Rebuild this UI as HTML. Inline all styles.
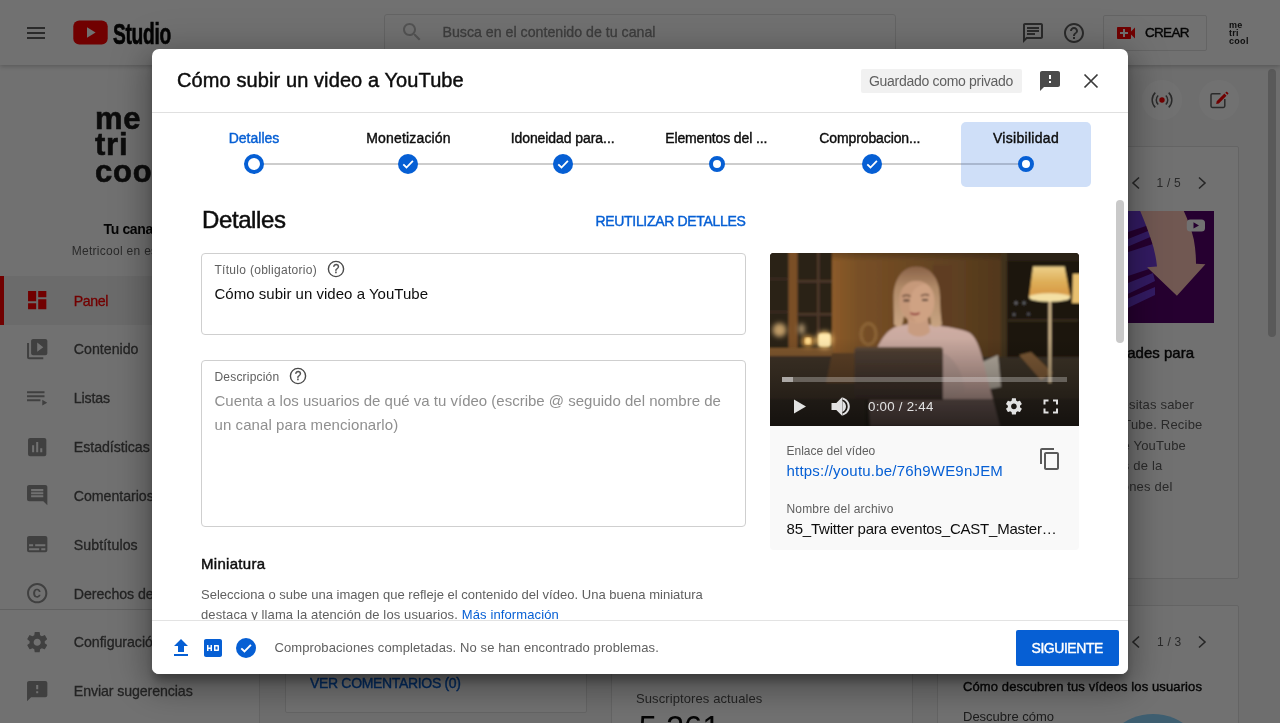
<!DOCTYPE html>
<html lang="es">
<head>
<meta charset="utf-8">
<title>YouTube Studio</title>
<style>
*{box-sizing:border-box;margin:0;padding:0}
html,body{width:1280px;height:723px;overflow:hidden;background:#f9f9f9;font-family:"Liberation Sans",sans-serif;color:#0d0d0d}
.abs{position:absolute}
#bg{opacity:.999;position:absolute;left:0;top:0;width:1280px;height:723px;overflow:hidden;background:#f9f9f9}
#hdr{position:absolute;left:0;top:0;width:1280px;height:65px;background:#fff;box-shadow:0 1px 5px rgba(0,0,0,.25);z-index:3}
#side{position:absolute;left:0;top:65px;width:260px;height:658px;background:#fff;border-right:1px solid #e4e4e4;z-index:2}
.nav{position:absolute;left:0;width:259px;height:48px}
.nav span{position:absolute;left:73px;top:15px;font-size:15px;color:#505050;letter-spacing:.1px}
.t{position:absolute;white-space:nowrap;line-height:1}
#ov{position:absolute;left:0;top:0;width:1280px;height:723px;background:rgba(0,0,0,.555);z-index:10}
#dlg{opacity:.999;position:absolute;left:152px;top:49px;width:976px;height:625.400px;background:#fff;border-radius:7px;z-index:20;box-shadow:0 8px 10px -2px rgba(0,0,0,.3),0 12px 30px 4px rgba(0,0,0,.22),0 4px 40px 8px rgba(0,0,0,.14);overflow:hidden}
.card{position:absolute;background:#fff;border:1px solid #e2e2e2;border-radius:2px}

.st{top:82px;font-size:14px;color:#0d0d0d;transform:translateX(-50%)}
.ring{position:absolute;width:16px;height:16px;border-radius:50%;border:4.300px solid #065fd4;background:#fff}
.ring.big{width:20px;height:20px;border-width:4.400px}
.chk{position:absolute;width:20px;height:20px;border-radius:50%;background:#065fd4}
.chk svg{display:block}
.box{border:1px solid #cfcfcf;border-radius:4px;background:#fff}
.nv{left:73.800px;font-size:14.200px;letter-spacing:-.05px;-webkit-text-stroke:.3px currentColor}
.cb{font-size:13px;color:#606060;letter-spacing:.2px}
</style>
</head>
<body>
<div id="bg">
  <div id="hdr">
    <svg class="abs" style="left:24px;top:21px" width="24" height="24" viewBox="0 0 24 24"><path fill="#606060" d="M3 18h18v-2H3v2zm0-5h18v-2H3v2zm0-7v2h18V6H3z"/></svg>
    <svg class="abs" style="left:73px;top:20px" width="35" height="25" viewBox="0 0 35 25"><rect x="0.300" y="0.500" width="34.400" height="24" rx="6" ry="6" fill="#ff0000"/><path d="M14 7.300l8.600 5.200-8.600 5.200z" fill="#fff"/></svg>
    <div class="t" id="h_studio" style="left:113px;top:18.600px;font-size:30px;font-weight:bold;color:#0a0a0a;transform-origin:0 0;transform:scaleX(.64);letter-spacing:-.5px;-webkit-text-stroke:.7px #0a0a0a">Studio</div>
    <div class="abs" style="left:384px;top:14px;width:512px;height:41px;border:1px solid #e2e2e2;border-radius:3px;background:#fff"></div>
    <svg class="abs" style="left:400px;top:20px" width="24" height="24" viewBox="0 0 24 24"><path fill="#bcbcbc" d="M15.500 14h-.79l-.28-.27C15.410 12.590 16 11.110 16 9.500 16 5.910 13.090 3 9.500 3S3 5.910 3 9.500 5.910 16 9.500 16c1.610 0 3.090-.59 4.230-1.570l.27.28v.79l5 4.990L20.490 19l-4.990-5zm-6 0C7.010 14 5 11.990 5 9.500S7.010 5 9.500 5 14 7.010 14 9.500 11.990 14 9.500 14z"/></svg>
    <div class="t" id="h_search" style="left:442.500px;top:25px;font-size:14.200px;color:#8a8a8a;-webkit-text-stroke:.3px #8a8a8a">Busca en el contenido de tu canal</div>
    <svg class="abs" style="left:1021px;top:20.500px" width="24" height="24" viewBox="0 0 24 24"><path fill="#606060" d="M4 4h16v12H5.170L4 17.170V4m0-2c-1.100 0-1.990.9-1.990 2L2 22l4-4h14c1.100 0 2-.9 2-2V4c0-1.100-.9-2-2-2H4zm2 10h8v2H6v-2zm0-3h12v2H6V9zm0-3h12v2H6V6z"/></svg>
    <svg class="abs" style="left:1061.700px;top:20.500px" width="24" height="24" viewBox="0 0 24 24"><path fill="#606060" d="M11 18h2v-2h-2v2zm1-16C6.480 2 2 6.480 2 12s4.480 10 10 10 10-4.480 10-10S17.520 2 12 2zm0 18c-4.410 0-8-3.590-8-8s3.590-8 8-8 8 3.590 8 8-3.590 8-8 8zm0-14c-2.210 0-4 1.790-4 4h2c0-1.100.9-2 2-2s2 .9 2 2c0 2-3 1.750-3 5h2c0-2.250 3-2.500 3-5 0-2.210-1.790-4-4-4z"/></svg>
    <div class="abs" style="left:1103px;top:14.500px;width:103.500px;height:36px;border:1px solid #e2e2e2;border-radius:2px;background:#fff"></div>
    <svg class="abs" style="left:1114px;top:20.500px" width="24" height="24" viewBox="0 0 24 24"><path fill="#ff0000" d="M17 10.500V7c0-.55-.45-1-1-1H4c-.55 0-1 .45-1 1v10c0 .55.45 1 1 1h12c.55 0 1-.45 1-1v-3.500l4 4v-11l-4 4z"/><path fill="#fff" d="M14 13h-3v3H9v-3H6v-2h3V8h2v3h3v2z"/></svg>
    <div class="t" id="h_crear" style="left:1145px;top:25.500px;font-size:13.500px;color:#0d0d0d;-webkit-text-stroke:.4px #0d0d0d;letter-spacing:-.7px">CREAR</div>
    <div class="abs" id="h_av" style="left:1229px;top:20.500px;font-size:9px;line-height:8.100px;font-weight:bold;color:#222;letter-spacing:.3px">me<br>tri<br>cool</div>
  </div>
  <div id="side">
    <div class="abs" id="sb_logo" style="left:95px;top:40.700px;font-size:31px;line-height:26.600px;font-weight:bold;color:#1c1c1c;letter-spacing:.8px;-webkit-text-stroke:.6px #1c1c1c">me<br>tri<br>cool</div>
    <div class="t" id="sb_tu" style="left:103.500px;top:156.5px;font-size:14px;color:#0d0d0d;letter-spacing:-.35px;font-weight:bold">Tu canal</div>
    <div class="t" id="sb_ch" style="left:71.700px;top:180px;font-size:12px;color:#606060;letter-spacing:.29px">Metricool en español</div>
    <div class="nav" style="top:210.9px;height:48.800px;background:#f2f2f2;border-left:4px solid #ff0000;"></div>
    <svg class="abs" style="left:25px;top:223.1px" width="24.400" height="24.400" viewBox="0 0 24 24"><path fill="#ff0000" d="M3 13h8V3H3v10zm0 8h8v-6H3v6zm10 0h8V11h-8v10zm0-18v6h8V3h-8z"/></svg>
    <div class="t nv" id="nv0" style="top:228.6px;color:#ff0000;letter-spacing:-.41px">Panel</div>
    <div class="nav" style="top:259.7px;height:48.800px;"></div>
    <svg class="abs" style="left:25px;top:271.9px" width="24.400" height="24.400" viewBox="0 0 24 24"><path fill="#909090" d="M4 6H2v14c0 1.100.9 2 2 2h14v-2H4V6zm16-4H8c-1.100 0-2 .9-2 2v12c0 1.100.9 2 2 2h12c1.100 0 2-.9 2-2V4c0-1.100-.9-2-2-2zm-8 12.500v-9l6 4.500-6 4.500z"/></svg>
    <div class="t nv" id="nv1" style="top:277.4px;color:#505050;letter-spacing:0">Contenido</div>
    <div class="nav" style="top:308.6px;height:48.800px;"></div>
    <svg class="abs" style="left:25px;top:320.8px" width="24.400" height="24.400" viewBox="0 0 24 24"><path fill="#909090" d="M2 5.200h17.200v2H2zM2 9.100h17.200v2H2zM2 13.100h13.200v2H2zM17 13.500v5.800l4.900-2.900z"/></svg>
    <div class="t nv" id="nv2" style="top:326.3px;color:#505050;letter-spacing:-.13px">Listas</div>
    <div class="nav" style="top:357.4px;height:48.800px;"></div>
    <svg class="abs" style="left:25px;top:369.6px" width="24.400" height="24.400" viewBox="0 0 24 24"><path fill="#909090" d="M19 3H5c-1.100 0-2 .9-2 2v14c0 1.100.9 2 2 2h14c1.100 0 2-.9 2-2V5c0-1.100-.9-2-2-2zM9 17H7v-7h2v7zm4 0h-2V7h2v10zm4 0h-2v-4h2v4z"/></svg>
    <div class="t nv" id="nv3" style="top:375.1px;color:#505050">Estadísticas</div>
    <div class="nav" style="top:406.2px;height:48.800px;"></div>
    <svg class="abs" style="left:25px;top:418.4px" width="24.400" height="24.400" viewBox="0 0 24 24"><path fill="#909090" d="M21.990 4c0-1.100-.89-2-1.990-2H4c-1.100 0-2 .9-2 2v12c0 1.100.9 2 2 2h14l4 4-.01-18zM18 14H6v-2h12v2zm0-3H6V9h12v2zm0-3H6V6h12v2z"/></svg>
    <div class="t nv" id="nv4" style="top:423.9px;color:#505050">Comentarios</div>
    <div class="nav" style="top:455px;height:48.800px;"></div>
    <svg class="abs" style="left:25px;top:467.2px" width="24.400" height="24.400" viewBox="0 0 24 24"><path fill="#909090" d="M20 4H4c-1.100 0-2 .9-2 2v12c0 1.100.9 2 2 2h16c1.100 0 2-.9 2-2V6c0-1.100-.9-2-2-2zM4 12h4v2H4v-2zm10 6H4v-2h10v2zm6 0h-4v-2h4v2zm0-4H10v-2h10v2z"/></svg>
    <div class="t nv" id="nv5" style="top:472.7px;color:#505050;letter-spacing:.09px">Subtítulos</div>
    <div class="nav" style="top:503.9px;height:48.800px;"></div>
    <svg class="abs" style="left:25px;top:516.1px" width="24.400" height="24.400" viewBox="0 0 24 24"><path fill="#909090" d="M10.080 10.860c.05-.33.16-.62.3-.87s.34-.46.59-.62c.24-.15.54-.22.91-.23.23.01.44.05.63.13.2.09.38.21.52.36s.25.33.34.53.13.42.14.64h1.790c-.02-.47-.11-.9-.28-1.290s-.4-.73-.7-1.010-.66-.5-1.080-.66-.88-.23-1.390-.23c-.65 0-1.220.11-1.700.34s-.88.53-1.200.92-.56.84-.71 1.360S8 11.290 8 11.870v.27c0 .58.080 1.120.23 1.640s.39.97.71 1.350.72.690 1.200.91 1.050.34 1.700.34c.47 0 .91-.08 1.320-.23s.77-.36 1.080-.63.560-.58.740-.94.290-.74.300-1.150h-1.790c-.01.21-.06.4-.15.58s-.21.330-.36.460-.320.230-.520.300c-.19.070-.39.090-.6.100-.36-.01-.66-.08-.89-.23-.25-.16-.45-.37-.59-.62s-.25-.55-.3-.88-.08-.67-.08-1v-.27c0-.35.030-.68.080-1.010zM12 2C6.480 2 2 6.480 2 12s4.480 10 10 10 10-4.480 10-10S17.520 2 12 2zm0 18c-4.410 0-8-3.590-8-8s3.590-8 8-8 8 3.590 8 8-3.590 8-8 8z"/></svg>
    <div class="t nv" id="nv6" style="top:521.6px;color:#505050">Derechos de autor</div>
    <div class="abs" style="left:0;top:543.700px;width:259px;height:115px;background:#fff;border-top:1px solid #dcdcdc"></div>
    <svg class="abs" style="left:25px;top:564.9px" width="24.400" height="24.400" viewBox="0 0 24 24"><path fill="#909090" d="M19.430 12.980c.04-.32.07-.64.07-.98s-.03-.66-.07-.98l2.110-1.650c.19-.15.240-.42.120-.64l-2-3.460c-.12-.22-.39-.3-.61-.22l-2.490 1c-.52-.4-1.080-.73-1.690-.98l-.38-2.650C14.460 2.180 14.250 2 14 2h-4c-.25 0-.46.180-.49.420l-.38 2.650c-.61.250-1.170.59-1.690.98l-2.490-1c-.23-.09-.49 0-.61.220l-2 3.460c-.13.220-.07.490.12.640l2.110 1.650c-.04.320-.07.650-.07.980s.03.660.07.980l-2.110 1.650c-.19.150-.24.420-.12.640l2 3.460c.12.220.39.300.61.220l2.490-1c.52.400 1.080.730 1.690.98l.38 2.650c.03.240.24.420.49.420h4c.25 0 .46-.18.490-.42l.38-2.650c.61-.25 1.170-.59 1.690-.98l2.490 1c.23.090.49 0 .61-.22l2-3.460c.12-.22.07-.49-.12-.64l-2.110-1.650zM12 15.500c-1.930 0-3.500-1.570-3.500-3.500s1.570-3.500 3.500-3.500 3.500 1.570 3.500 3.500-1.570 3.500-3.500 3.500z"/></svg>
    <div class="t nv" id="nb0" style="top:570.4px;color:#505050">Configuración</div>
    <svg class="abs" style="left:25px;top:613.7px" width="24.400" height="24.400" viewBox="0 0 24 24"><path fill="#909090" d="M20 2H4c-1.100 0-1.990.9-1.990 2L2 22l4-4h14c1.100 0 2-.9 2-2V4c0-1.100-.9-2-2-2zm-7 12h-2v-2h2v2zm0-4h-2V6h2v4z"/></svg>
    <div class="t nv" id="nb1" style="top:619.2px;color:#505050;letter-spacing:-.1px">Enviar sugerencias</div>
  </div>
  <div id="main">
    <div class="abs" style="left:1142px;top:80px;width:40px;height:40px;border-radius:50%;background:#fff"></div>
    <div class="abs" style="left:1199px;top:80px;width:40px;height:40px;border-radius:50%;background:#fff"></div>
    <svg class="abs" style="left:1149.800px;top:88px" width="24" height="24" viewBox="0 0 24 24"><circle cx="12" cy="12" r="2.700" fill="#ff0000"/><path d="M8.200 7.500a6.200 6.200 0 0 0 0 9M15.800 7.500a6.200 6.200 0 0 1 0 9M5.300 4.600a10.300 10.300 0 0 0 0 14.800M18.700 4.600a10.300 10.300 0 0 1 0 14.800" fill="none" stroke="#606060" stroke-width="1.500"/></svg>
    <svg class="abs" style="left:1207px;top:88px" width="24" height="24" viewBox="0 0 24 24"><path d="M13.500 5.700H5.400c-.8 0-1.400.6-1.400 1.400v11c0 .8.600 1.400 1.400 1.400h11c.8 0 1.400-.6 1.400-1.400V11" fill="none" stroke="#606060" stroke-width="1.500"/><path d="M9.200 15.900l.5-2.600 7.700-7.700 2.100 2.100-7.700 7.700zM18.300 4.700l.8-.8c.3-.3.800-.3 1.100 0l1 1c.3.300.3.800 0 1.100l-.8.800z" fill="#ff0000"/></svg>
    <div class="abs" style="left:1267.500px;top:68.500px;width:8px;height:268px;border-radius:4px;background:#c8c8c8"></div>
    <!-- column cards -->
    <div class="card" style="left:285px;top:146px;width:302px;height:567px"></div>
    <div class="t" id="c_ver" style="left:310px;top:675.500px;font-size:14px;color:#065fd4;-webkit-text-stroke:.4px #065fd4;letter-spacing:-.33px">VER COMENTARIOS (0)</div>
    <div class="card" style="left:611px;top:146px;width:302px;height:600px"></div>
    <div class="t" id="c_sus" style="left:636px;top:692px;font-size:13px;color:#505050;letter-spacing:.1px">Suscriptores actuales</div>
    <div class="t" id="c_num" style="left:638.800px;top:712.300px;font-size:32.600px;color:#0d0d0d">5.261</div>
    <div class="card" style="left:937px;top:145.500px;width:302px;height:433.500px"></div>
    <svg class="abs" style="left:1130px;top:176px" width="12" height="14" viewBox="0 0 12 14"><path d="M9 1.500L3 7l6 5.500" fill="none" stroke="#565656" stroke-width="1.600"/></svg>
    <div class="t" id="c_p1" style="left:1156.500px;top:177px;font-size:12px;color:#606060;letter-spacing:.2px">1 / 5</div>
    <svg class="abs" style="left:1196px;top:176px" width="12" height="14" viewBox="0 0 12 14"><path d="M3 1.500L9 7l-6 5.500" fill="none" stroke="#565656" stroke-width="1.600"/></svg>
    <div id="thumb" class="abs" style="left:963px;top:211px;width:251px;height:112px;background:#50006a;overflow:hidden">
      <svg width="251" height="112" viewBox="0 0 251 112" style="display:block"><rect width="251" height="112" fill="#56006e"/><path d="M150 0h28l8 14-36 12zM150 34l40-16 2 6-42 18zM150 46l43-14 3 24-10 2-36 12zM150 78l40-16 2 8-42 20zM150 94l42-18v8l-42 20z" fill="#743ee0"/><path d="M177.200 0h43.600c4 9 7.800 18.600 10 28.600 1.500 8 2.200 16 2.200 24.200l9.400.4-28.500 31.600-29.800-28.500 9.900-.9c-1-9.500-3-18.400-6-26.800-2.800-9-6.500-18.600-10.800-28.600z" fill="#ffc6ba"/><rect x="223.800" y="8.400" width="18.200" height="12" rx="3.500" fill="#fff"/><path d="M230.500 11.200l5.500 3.200-5.500 3.200z" fill="#56006e"/></svg>
    </div>
    <div class="t" id="c_t1" style="left:963px;top:344.500px;font-size:15px;color:#0d0d0d;-webkit-text-stroke:.45px #0d0d0d;width:231px;text-align:right">Novedades para</div>
    <div class="t cb" id="cb0" style="right:86.0px;top:398.0px">Todo lo que necesitas saber</div>
    <div class="t cb" id="cb1" style="right:77.5px;top:418.4px">sobre YouTube. Recibe</div>
    <div class="t cb" id="cb2" style="right:94.0px;top:438.8px">novedades de YouTube</div>
    <div class="t cb" id="cb3" style="right:117.5px;top:459.2px">y las noticias de la</div>
    <div class="t cb" id="cb4" style="right:107.5px;top:479.6px">nuevas funciones del</div>
    <div class="card" style="left:937px;top:605px;width:302px;height:200px"></div>
    <svg class="abs" style="left:1130px;top:634.500px" width="12" height="14" viewBox="0 0 12 14"><path d="M9 1.500L3 7l6 5.500" fill="none" stroke="#565656" stroke-width="1.600"/></svg>
    <div class="t" id="c_p2" style="left:1157px;top:636px;font-size:12px;color:#606060;letter-spacing:.2px">1 / 3</div>
    <svg class="abs" style="left:1196px;top:634.500px" width="12" height="14" viewBox="0 0 12 14"><path d="M3 1.500L9 7l-6 5.500" fill="none" stroke="#565656" stroke-width="1.600"/></svg>
    <div class="t" id="c_t2" style="left:963px;top:680px;font-size:13px;color:#0d0d0d;-webkit-text-stroke:.4px #0d0d0d;letter-spacing:.11px">Cómo descubren tus vídeos los usuarios</div>
    <div class="t" id="c_t3" style="left:963px;top:710px;font-size:13px;color:#404040">Descubre cómo</div>
    <div class="abs" style="left:1098.700px;top:713.700px;width:108px;height:108px;border-radius:50%;background:#8cd4fc"></div>
  </div>
</div>
<div id="ov"></div>
<div id="dlg">
  <!-- header -->
  <div class="t" id="d_title" style="left:25px;top:21px;font-size:20px;color:#0d0d0d;letter-spacing:.1px;-webkit-text-stroke:.45px #0d0d0d">Cómo subir un video a YouTube</div>
  <div class="abs" style="left:709px;top:20px;width:161px;height:24px;background:#f1f1f1;border-radius:2px"></div>
  <div class="t" id="d_chip" style="left:717px;top:25px;font-size:14px;color:#606060;letter-spacing:-.3px">Guardado como privado</div>
  <svg class="abs" style="left:886px;top:20px" width="24" height="24" viewBox="0 0 24 24"><path fill="#4a4a4a" d="M20 2H4c-1.100 0-1.990.9-1.990 2L2 22l4-4h14c1.100 0 2-.9 2-2V4c0-1.100-.9-2-2-2zm-7 12h-2v-2h2v2zm0-4h-2V6h2v4z"/></svg>
  <svg class="abs" style="left:931px;top:24px" width="16" height="16" viewBox="0 0 16 16"><path d="M1.500 1.500L14.500 14.500M14.500 1.500L1.500 14.500" stroke="#3a3a3a" stroke-width="1.700" fill="none"/></svg>
  <div class="abs" style="left:0;top:63.400px;width:976px;height:1px;background:#e0e0e0"></div>
  <!-- stepper -->
  <div class="abs" style="left:102px;top:114.400px;width:772px;height:1.600px;background:#cdcdcd"></div>
  <div class="abs" style="left:809px;top:73px;width:130px;height:65px;background:#cfdff8;border-radius:5px"></div>
  <div class="abs" style="left:809px;top:114.400px;width:65px;height:1.600px;background:#a9b7cf"></div>
  <div class="t st" id="s1" style="left:102px;color:#065fd4;-webkit-text-stroke:.4px #065fd4">Detalles</div>
  <div class="t st" id="s2" style="left:256.500px;letter-spacing:.17px;-webkit-text-stroke:.4px #0d0d0d">Monetización</div>
  <div class="t st" id="s3" style="left:410.600px;letter-spacing:-.07px;-webkit-text-stroke:.4px #0d0d0d">Idoneidad para...</div>
  <div class="t st" id="s4" style="left:564.200px;letter-spacing:-.14px;-webkit-text-stroke:.4px #0d0d0d">Elementos del ...</div>
  <div class="t st" id="s5" style="left:717.800px;letter-spacing:-.11px;-webkit-text-stroke:.4px #0d0d0d">Comprobacion...</div>
  <div class="t st" id="s6" style="left:874px;letter-spacing:.3px;-webkit-text-stroke:.4px #0d0d0d">Visibilidad</div>
  <div class="ring big" style="left:92px;top:105.200px"></div>
  <div class="chk" style="left:246px;top:105.200px"><svg width="20" height="20" viewBox="0 0 20 20"><path d="M5.300 10.300l3.200 3.200 6.400-6.700" stroke="#fff" stroke-width="1.800" fill="none"/></svg></div>
  <div class="chk" style="left:401px;top:105.200px"><svg width="20" height="20" viewBox="0 0 20 20"><path d="M5.300 10.300l3.200 3.200 6.400-6.700" stroke="#fff" stroke-width="1.800" fill="none"/></svg></div>
  <div class="ring" style="left:557px;top:107.200px"></div>
  <div class="chk" style="left:709.500px;top:105.200px"><svg width="20" height="20" viewBox="0 0 20 20"><path d="M5.300 10.300l3.200 3.200 6.400-6.700" stroke="#fff" stroke-width="1.800" fill="none"/></svg></div>
  <div class="ring" style="left:866px;top:107.200px"></div>
  <!-- body -->
  <div class="t" id="d_h" style="left:50px;top:159px;font-size:24px;color:#0d0d0d;letter-spacing:-.4px;-webkit-text-stroke:.5px #0d0d0d">Detalles</div>
  <div class="t" id="d_reuse" style="left:443.500px;top:165px;font-size:14px;color:#065fd4;letter-spacing:-.32px;-webkit-text-stroke:.4px #065fd4">REUTILIZAR DETALLES</div>
  <div class="abs box" style="left:49px;top:204px;width:545px;height:82px"></div>
  <div class="t" id="l_tit" style="left:62.500px;top:215px;font-size:12px;color:#606060;letter-spacing:.29px">Título (obligatorio)</div>
  <svg class="abs hlp" style="left:175px;top:211px" width="18" height="18" viewBox="0 0 18 18"><circle cx="9" cy="9" r="7.600" fill="none" stroke="#4a4a4a" stroke-width="1.400"/><text x="9" y="13" text-anchor="middle" font-family="Liberation Sans, sans-serif" font-size="12" fill="#4a4a4a" stroke="#4a4a4a" stroke-width=".3">?</text></svg>
  <div class="t" id="v_tit" style="left:62.500px;top:237px;font-size:15px;color:#0d0d0d;letter-spacing:.02px">Cómo subir un video a YouTube</div>
  <div class="abs box" style="left:49px;top:311px;width:545px;height:167px"></div>
  <div class="t" id="l_desc" style="left:62.500px;top:322px;font-size:12px;color:#606060;letter-spacing:.19px">Descripción</div>
  <svg class="abs hlp" style="left:137px;top:318px" width="18" height="18" viewBox="0 0 18 18"><circle cx="9" cy="9" r="7.600" fill="none" stroke="#4a4a4a" stroke-width="1.400"/><text x="9" y="13" text-anchor="middle" font-family="Liberation Sans, sans-serif" font-size="12" fill="#4a4a4a" stroke="#4a4a4a" stroke-width=".3">?</text></svg>
  <div class="t" id="p1" style="left:62.500px;top:344px;font-size:15px;color:#8f8f8f">Cuenta a los usuarios de qué va tu vídeo (escribe @ seguido del nombre de</div>
  <div class="t" id="p2" style="left:62.500px;top:368px;font-size:15px;color:#8f8f8f;letter-spacing:.075px">un canal para mencionarlo)</div>
  <div class="t" id="d_min" style="left:49px;top:507px;font-size:15px;color:#0d0d0d;letter-spacing:.3px;-webkit-text-stroke:.45px #0d0d0d">Miniatura</div>
  <div class="t" id="m1" style="left:49px;top:539px;font-size:13px;color:#606060;letter-spacing:.02px">Selecciona o sube una imagen que refleje el contenido del vídeo. Una buena miniatura</div>
  <div class="t" id="m2" style="left:49px;top:559px;font-size:13px;color:#606060;letter-spacing:.125px">destaca y llama la atención de los usuarios. <span style="color:#065fd4">Más información</span></div>
  <!-- video -->
  <div id="vid" class="abs" style="left:618px;top:204px;width:309px;height:173px;background:#3a2a1c;border-radius:4px 4px 0 0;overflow:hidden"><svg width="309" height="173" viewBox="0 0 309 173" style="display:block">
    <defs>
      <linearGradient id="gw" x1="0" x2="1" y1="0" y2="0"><stop offset="0" stop-color="#8e5c2a"/><stop offset=".16" stop-color="#785026"/><stop offset=".38" stop-color="#6e4924"/><stop offset=".7" stop-color="#5f4121"/><stop offset="1" stop-color="#50361c"/></linearGradient>
      <linearGradient id="gl" x1="0" x2="0" y1="0" y2="1"><stop offset="0" stop-color="#ecd08a"/><stop offset=".5" stop-color="#deae58"/><stop offset=".85" stop-color="#d89c48"/><stop offset="1" stop-color="#e9c880"/></linearGradient>
      <linearGradient id="gb" x1="0" x2="0" y1="0" y2="1"><stop offset="0" stop-color="#000" stop-opacity="0"/><stop offset=".4" stop-color="#000" stop-opacity=".2"/><stop offset="1" stop-color="#000" stop-opacity=".58"/></linearGradient>
      <linearGradient id="gt" x1="0" x2="0" y1="0" y2="1"><stop offset="0" stop-color="#000" stop-opacity=".35"/><stop offset="1" stop-color="#000" stop-opacity="0"/></linearGradient>
      <linearGradient id="gbl" x1="0" x2="0" y1="0" y2="1"><stop offset="0" stop-color="#cfaea4"/><stop offset="1" stop-color="#ae918a"/></linearGradient>
      <linearGradient id="glap" x1="0" x2="0" y1="0" y2="1"><stop offset="0" stop-color="#5e4a3a"/><stop offset=".1" stop-color="#4e3e32"/><stop offset="1" stop-color="#3a2e28"/></linearGradient>
      <linearGradient id="gh" x1="0" x2="0" y1="0" y2="1"><stop offset="0" stop-color="#8a6248"/><stop offset=".35" stop-color="#b08a68"/><stop offset="1" stop-color="#c8a482"/></linearGradient>
      <filter id="bl" x="-5%" y="-5%" width="110%" height="110%"><feGaussianBlur stdDeviation="1.200"/></filter>
      <filter id="bl2" x="-30%" y="-30%" width="160%" height="160%"><feGaussianBlur stdDeviation="2.600"/></filter>
    </defs>
    <rect width="309" height="173" fill="#2a2117"/>
    <g filter="url(#bl)">
      <rect x="60" y="-5" width="175" height="135" fill="url(#gw)"/>
      <rect x="163" y="12" width="19" height="62" fill="#5e3c22" opacity=".75"/>
      <rect x="60" y="-5" width="175" height="13" fill="url(#gt)"/>
      <rect x="-5" y="-5" width="67" height="108" fill="#2b2419"/>
      <rect x="18.500" y="-5" width="9" height="108" fill="#7a5028"/>
      <rect x="27" y="27" width="35" height="2.500" fill="#4e382a"/>
      <rect x="27" y="60" width="35" height="2.500" fill="#4e382a"/>
      <rect x="47" y="-5" width="2.500" height="88" fill="#4e382a"/>
      <rect x="-5" y="25" width="23" height="2" fill="#3a2c20"/>
      <rect x="-5" y="58" width="23" height="2" fill="#3a2c20"/>
      <rect x="-5" y="95" width="68" height="8" fill="#80592f"/>
      <rect x="-5" y="103" width="100" height="75" fill="#3c3028"/>
      <path d="M62 100h24v30h-30z" fill="#5c4028"/>
      <rect x="232" y="-5" width="82" height="112" fill="#1d1810"/>
      <rect x="231" y="-5" width="6" height="112" fill="#41301e"/>
      <rect x="237" y="-5" width="77" height="13" fill="#2c2216"/>
      <rect x="238" y="66" width="70" height="2.500" fill="#352b1f"/>
      <circle cx="246" cy="50" r="1.700" fill="#68686e"/><circle cx="254" cy="50" r="1.700" fill="#606066"/><circle cx="244" cy="61.500" r="1.500" fill="#5c5c62"/><circle cx="258.500" cy="61" r="1.500" fill="#55555c"/>
      <rect x="200" y="104" width="115" height="75" fill="#3b3027"/>
      <path d="M249 102l12-3 22 21-12 7z" fill="#7a5834"/>
      <path d="M203 113l25-11 3 32-22 4z" fill="#b3aa9e"/>
      <rect x="278.500" y="46" width="2.800" height="84" fill="#d2b88e"/>
      <path d="M263 13.500h31.500l6 31h-41.500z" fill="url(#gl)"/>
      <ellipse cx="279.700" cy="44.500" rx="20.500" ry="4.300" fill="#f4e0a4"/>
      <path d="M303 21h8v29h-9z" fill="#e8c070"/>
      <!-- chair back -->
      <ellipse cx="98.500" cy="81" rx="7.500" ry="10.500" fill="none" stroke="#8a6234" stroke-width="3.500"/>
      <!-- woman -->
      <path d="M100 173c-2-34 0-62 8-80 5-9 10-17 20-20l16-3 20 2c14 2 28 4 36 8 8 6 12 22 16 40l14 53z" fill="url(#gbl)"/>
      <path d="M138 66h20l2 13c-6 6-16 6-22 0z" fill="#c89c80"/>
      <path d="M123.500 46c0-20 9-32.500 23-32.500s23.500 12 23.500 31c0 10 1 20 2 27-3 3-8 3-11 1l-1-9h-26l-2 9c-3 2-6 1-8-1 0-8-.5-16-.5-25.500z" fill="url(#gh)"/>
      <path d="M129.500 48c0-13 7-20 17-20s18 7 18 20c0 12-7 22-17 22s-18-10-18-22z" fill="#cfa283"/>
      <path d="M129.500 48c0-13 7-20 17-20 4 0 7 1 10 3-10 0-17 8-17 20 0 8 3 14 7 18-9-1-17-10-17-21z" fill="#c09274" opacity=".6"/>
      <path d="M140.500 60q4.500 2 9 0-4.500 3.500-9 0z" fill="#8c2c30" stroke="#8c2c30" stroke-width="1.200"/>
      <path d="M132.500 43.500q4-2.500 8 0M151 43q4-2.500 8-.5" stroke="#5e4032" stroke-width="1.500" fill="none"/>
      <path d="M133.500 47.500h6M152 47h6" stroke="#4a342c" stroke-width="1.800" fill="none"/>
      <!-- laptop -->
      <path d="M84.500 97c0-2 2-3 4-3h81c2 0 3.500 1 3.500 3v50h-88.500z" fill="url(#glap)"/>
      <path d="M173 100c10 4 20 18 22 38l-22 10z" fill="#b59a92"/>
      <rect x="-5" y="146" width="320" height="32" fill="#2c2420" opacity=".55"/>
    </g>
    <g filter="url(#bl2)">
      <ellipse cx="54.500" cy="87" rx="8.500" ry="9" fill="#f0c070"/>
      <ellipse cx="38" cy="88.500" rx="6.500" ry="6" fill="#d49a48"/>
      <ellipse cx="9.500" cy="77" rx="7" ry="7" fill="#c09c68"/>
      <ellipse cx="31.500" cy="76" rx="3.200" ry="5.500" fill="#b89c74"/>
    </g>
    <rect x="48.500" y="80.500" width="12" height="13" rx="2" fill="#ffe9ae" filter="url(#bl)"/>
    <rect x="35" y="84.500" width="6" height="7" rx="2" fill="#ffd98a" filter="url(#bl)"/>
    <rect x="0" y="85" width="309" height="88" fill="url(#gb)"/>
    <rect x="12" y="124" width="285" height="5" fill="#fff" fill-opacity=".28"/>
    <rect x="12" y="124" width="11" height="5" fill="#fff" fill-opacity=".45"/>
    <path d="M24 146.500l12 7-12 7z" fill="#e2e2e2"/>
    <path d="M61.500 150v7h4.800l6 6v-19l-6 6zM76 153.500c0-2.400-1.400-4.400-3.400-5.400v10.800c2-1 3.400-3 3.400-5.400zM72.600 144.500v2.100c3 .9 5.100 3.600 5.100 6.900s-2.100 6-5.100 6.900v2.100c4.100-.9 7.200-4.600 7.200-9s-3.100-8.100-7.200-9z" fill="#e2e2e2"/>
    <text x="98" y="158.200" font-family="Liberation Sans, sans-serif" font-size="13.300" fill="#e2e2e2" letter-spacing=".25">0:00 / 2:44</text>
    <g transform="translate(234.200 143.700) scale(.81)"><path fill="#e2e2e2" d="M19.430 12.980c.04-.32.070-.64.070-.98s-.03-.66-.07-.98l2.110-1.650c.19-.15.240-.42.120-.64l-2-3.460c-.12-.22-.39-.3-.61-.22l-2.490 1c-.52-.4-1.080-.73-1.690-.98l-.38-2.650C14.460 2.180 14.250 2 14 2h-4c-.25 0-.46.180-.49.420l-.38 2.650c-.61.250-1.170.59-1.690.98l-2.490-1c-.23-.09-.49 0-.61.220l-2 3.460c-.13.220-.07.490.12.640l2.110 1.650c-.04.320-.07.650-.07.980s.03.660.07.980l-2.110 1.650c-.19.150-.24.420-.12.640l2 3.460c.12.220.39.300.61.220l2.490-1c.52.400 1.080.730 1.690.98l.38 2.650c.03.240.24.420.49.420h4c.25 0 .46-.18.490-.42l.38-2.650c.61-.25 1.170-.59 1.690-.98l2.490 1c.23.090.49 0 .61-.22l2-3.460c.12-.22.070-.49-.12-.64l-2.110-1.650zM12 15.500c-1.930 0-3.500-1.570-3.500-3.500s1.570-3.500 3.500-3.500 3.500 1.570 3.500 3.500-1.570 3.500-3.500 3.500z"/></g>
    <path d="M273.500 151.500v-5h5v2h-3v3zM283 146.500h5v5h-2v-3h-3zM288 155.500v5h-5v-2h3v-3zM278.500 160.500h-5v-5h2v3h3z" fill="#e2e2e2"/>
  </svg></div>
  <div class="abs" style="left:618px;top:377px;width:309px;height:124px;background:#f9f9f9;border-radius:0 0 4px 4px"></div>
  <div class="t" id="l_link" style="left:634.500px;top:396px;font-size:12px;color:#606060">Enlace del vídeo</div>
  <div class="t" id="v_link" style="left:634.500px;top:414px;font-size:15px;color:#065fd4;letter-spacing:.2px">https://youtu.be/76h9WE9nJEM</div>
  <svg class="abs" style="left:886px;top:398px" width="24" height="24" viewBox="0 0 24 24"><path fill="#5a5a5a" d="M16 1H4c-1.100 0-2 .9-2 2v14h2V3h12V1zm3 4H8c-1.100 0-2 .9-2 2v14c0 1.100.9 2 2 2h11c1.100 0 2-.9 2-2V7c0-1.100-.9-2-2-2zm0 16H8V7h11v14z"/></svg>
  <div class="t" id="l_file" style="left:634.500px;top:454px;font-size:12px;color:#606060;letter-spacing:.17px">Nombre del archivo</div>
  <div class="t" id="v_file" style="left:634.500px;top:472px;font-size:15px;color:#0d0d0d;letter-spacing:-.21px">85_Twitter para eventos_CAST_Master…</div>
  <!-- scrollbar -->
  <div class="abs" style="left:963.500px;top:150.500px;width:8px;height:143px;background:#c9c9c9;border-radius:4px"></div>
  <!-- footer -->
  <div class="abs" style="left:0;top:571px;width:976px;height:54px;background:#fff;border-top:1px solid #e3e3e3"></div>
  <svg class="abs" style="left:17px;top:587px" width="24" height="24" viewBox="0 0 24 24"><path fill="#065fd4" d="M9 16h6v-6h4l-7-7-7 7h4zm-4 2h14v2H5z"/></svg>
  <svg class="abs" style="left:49px;top:587px" width="24" height="24" viewBox="0 0 24 24"><path fill="#065fd4" d="M19 3H5c-1.110 0-2 .9-2 2v14c0 1.100.89 2 2 2h14c1.100 0 2-.9 2-2V5c0-1.100-.9-2-2-2zm-8 12H9.500v-2h-2v2H6V9h1.500v2.500h2V9H11v6zm2-6h4c.55 0 1 .45 1 1v4c0 .55-.45 1-1 1h-4V9zm1.500 4.500h2v-3h-2v3z"/></svg>
  <svg class="abs" style="left:82px;top:587px" width="24" height="24" viewBox="0 0 24 24"><circle cx="12" cy="12" r="10" fill="#065fd4"/><path d="M7.300 12.300l3.200 3.200 6.400-6.700" stroke="#fff" stroke-width="1.900" fill="none"/></svg>
  <div class="t" id="f_txt" style="left:122.500px;top:592px;font-size:13px;color:#606060;letter-spacing:.097px">Comprobaciones completadas. No se han encontrado problemas.</div>
  <div class="abs" style="left:864px;top:581px;width:103px;height:36px;background:#065fd4;border-radius:2px"></div>
  <div class="t" id="f_btn" style="left:879.500px;top:591.500px;font-size:14px;color:#fff;letter-spacing:-.45px;-webkit-text-stroke:.4px #fff">SIGUIENTE</div>
</div>
</body>
</html>
